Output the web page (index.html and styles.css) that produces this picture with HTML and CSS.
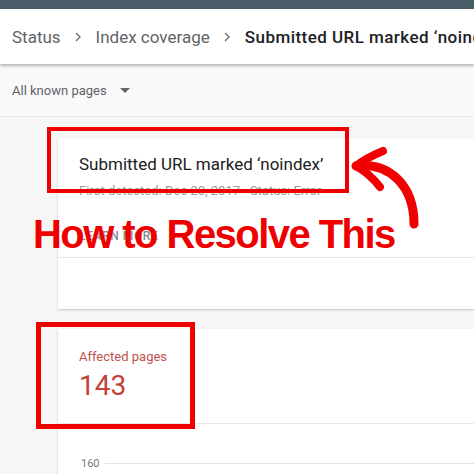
FILE: index.html
```html
<!DOCTYPE html>
<html lang="en">
<head>
<meta charset="utf-8">
<title>Index coverage</title>
<link rel="stylesheet" href="styles.css">
</head>
<body>
<div class="page">
  <div class="topbar"></div>
  <header class="crumbs">
    <span class="crumb">Status</span>
    <svg class="chev" viewBox="0 0 8 10" width="8" height="10"><path d="M2 1 L6 5 L2 9"/></svg>
    <span class="crumb">Index coverage</span>
    <svg class="chev" viewBox="0 0 8 10" width="8" height="10"><path d="M2 1 L6 5 L2 9"/></svg>
    <span class="crumb current">Submitted URL marked ‘noindex’</span>
  </header>
  <div class="filter">
    <span class="filter-label">All known pages</span>
    <span class="caret"></span>
  </div>
  <main class="main">
    <section class="card issue">
      <div class="issue-body">
        <h1 class="issue-title">Submitted URL marked ‘noindex’</h1>
        <p class="issue-meta">First detected: Dec 20, 2017 · Status: Error</p>
        <span class="learn">LEARN MORE</span>
      </div>
      <div class="issue-foot"></div>
    </section>
    <section class="card stats">
      <div class="stat">
        <div class="stat-label">Affected pages</div>
        <div class="stat-value">143</div>
      </div>
      <div class="chart">
        <div class="axis-row"><span class="axis-label">160</span><span class="gridline"></span></div>
      </div>
    </section>
  </main>

  <div class="mark mark-title"></div>
  <div class="mark mark-stat"></div>
  <div class="headline">How to Resolve This</div>
  <svg class="arrow" viewBox="340 140 90 95" width="90" height="95">
    <defs><filter id="soft"><feGaussianBlur stdDeviation="0.6"/></filter></defs>
    <g filter="url(#soft)">
      <path class="shaft" d="M356 166 C 390 162, 414 186, 414 224"/>
      <path class="head" d="M383 151 Q 366 158, 356 166 Q 370 174, 380 187"/>
    </g>
  </svg>
</div>
</body>
</html>
```
FILE: styles.css
```css
html, body {
  margin: 0;
  padding: 0;
}
body {
  width: 474px;
  height: 474px;
  overflow: hidden;
  background: #f6f6f6;
  font-family: Roboto, "Liberation Sans", Arial, sans-serif;
}
.page {
  position: relative;
  width: 474px;
  height: 474px;
  overflow: hidden;
}
.topbar {
  height: 9px;
  background: #485c68;
}
.crumbs {
  position: relative;
  z-index: 2;
  height: 55px;
  background: #fff;
  box-shadow: 0 2px 3px rgba(0, 0, 0, 0.28);
  display: flex;
  align-items: center;
  padding-left: 12px;
  white-space: nowrap;
  font-size: 17px;
  color: #5f6368;
  overflow: hidden;
}
.crumb {
  flex: none;
}
.crumb.current {
  color: #202124;
  font-weight: 500;
  letter-spacing: 0.45px;
}
.chev {
  flex: none;
  margin: 0 14px 0 13px;
  fill: none;
  stroke: #6b6f73;
  stroke-width: 1.4;
}
.filter {
  height: 52px;
  background: #f9f9f9;
  border-bottom: 1px solid #e8e8e8;
  display: flex;
  align-items: center;
  padding-left: 12px;
  font-size: 13px;
  color: #5f6368;
}
.caret {
  width: 0;
  height: 0;
  margin-left: 13px;
  border-left: 5px solid transparent;
  border-right: 5px solid transparent;
  border-top: 5px solid #666;
}
.main {
  padding: 21px 0 0 58px;
  display: flex;
  flex-direction: column;
  gap: 20px;
}
.card {
  background: #fff;
  box-shadow: 0 1px 2px rgba(0, 0, 0, 0.2);
}
.issue-body {
  padding: 16px 0 13px 21px;
  display: flex;
  flex-direction: column;
  align-items: flex-start;
}
.issue-title {
  margin: 0;
  font-size: 17px;
  line-height: 20px;
  font-weight: 400;
  color: #212121;
  white-space: nowrap;
}
.issue-meta {
  margin: 9px 0 0;
  font-size: 13px;
  line-height: 16px;
  color: #9a9a9a;
  white-space: nowrap;
}
.learn {
  margin-top: 29px;
  font-size: 12px;
  line-height: 16px;
  font-weight: 500;
  letter-spacing: 0.6px;
  color: #8a8a8a;
}
.issue-foot {
  height: 51px;
  border-top: 1px solid #e6e6e6;
}
.stat {
  padding: 20px 0 21px 21px;
  border-bottom: 1px solid #e8e8e8;
}
.stat-label {
  font-size: 13px;
  line-height: 16px;
  color: #c0524c;
}
.stat-value {
  margin-top: 5px;
  font-size: 28px;
  line-height: 32px;
  color: #c4413a;
}
.chart {
  padding: 32px 0 20px 23px;
}
.axis-row {
  display: flex;
  align-items: center;
  gap: 5px;
  height: 14px;
}
.axis-label {
  font-size: 11px;
  color: #777;
}
.gridline {
  flex: 1;
  height: 1px;
  background: #e4e4e4;
}

/* annotation overlays */
.mark {
  position: absolute;
  box-sizing: border-box;
  border: 4px solid #ee0000;
  z-index: 5;
}
.mark-title {
  left: 47px;
  top: 127px;
  width: 302px;
  height: 66px;
}
.mark-stat {
  left: 36px;
  top: 322px;
  width: 159px;
  height: 107px;
  border-width: 5px;
}
.headline {
  position: absolute;
  z-index: 6;
  left: 33px;
  top: 214px;
  font-family: "Liberation Sans", Arial, sans-serif;
  font-weight: 700;
  font-size: 40px;
  line-height: 40px;
  letter-spacing: -1.55px;
  color: #ee0000;
  white-space: nowrap;
}
.arrow {
  position: absolute;
  z-index: 6;
  left: 340px;
  top: 140px;
  fill: none;
  stroke: #f00000;
  stroke-linecap: round;
  stroke-linejoin: round;
}
.arrow .shaft {
  stroke-width: 9;
}
.arrow .head {
  stroke-width: 8;
}
```
